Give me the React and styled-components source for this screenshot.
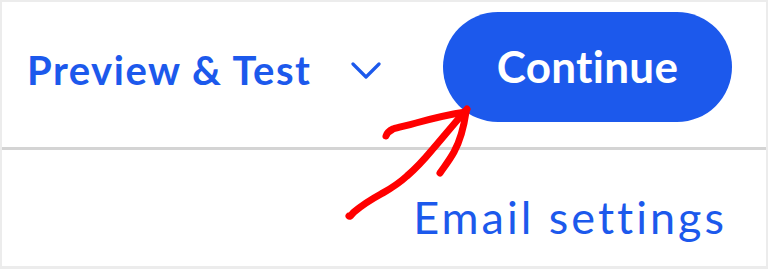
import React from "react";
import styled, { createGlobalStyle } from "styled-components";

const Global = createGlobalStyle`
  html, body { margin: 0; padding: 0; background: #ffffff; }
  body { font-family: "Lato", "Noto Sans", sans-serif; }
`;

const Frame = styled.div`
  position: relative;
  box-sizing: border-box;
  width: 768px;
  height: 269px;
  border: 2px solid #ececec;
  border-bottom-width: 3px;
  background: #ffffff;
  display: flex;
  flex-direction: column;
`;

const TopBar = styled.div`
  display: flex;
  align-items: center;
  justify-content: space-between;
  height: 145px;
  box-sizing: border-box;
  padding: 10px 34px 25px 25px;
`;

const PreviewGroup = styled.button`
  display: flex;
  align-items: center;
  gap: 40px;
  background: none;
  border: none;
  padding: 0;
  margin-top: 6px;
  color: #1c59ec;
  font-family: "Lato", "Noto Sans", sans-serif;
  font-weight: 700;
  font-size: 40px;
  letter-spacing: 1.5px;
  cursor: pointer;
`;

const PrimaryButton = styled.button`
  width: 289px;
  height: 110px;
  border-radius: 55px;
  border: none;
  background: #1c59ec;
  color: #ffffff;
  font-family: "Lato", "Noto Sans", sans-serif;
  font-weight: 700;
  font-size: 44px;
  letter-spacing: 0.3px;
  padding: 0 0 2px;
  cursor: pointer;
`;

const Divider = styled.div`
  height: 3px;
  background: #d4d4d4;
`;

const BottomRow = styled.div`
  flex: 1;
  display: flex;
  justify-content: flex-end;
  align-items: flex-start;
  padding: 40px 42px 0 0;
`;

const LinkText = styled.a`
  color: #1c59ec;
  font-family: "Lato", "Noto Sans", sans-serif;
  font-weight: 400;
  font-size: 45px;
  letter-spacing: 3px;
  margin-right: -3px;
  text-decoration: none;
  line-height: 1.2;
`;

const ArrowOverlay = styled.svg`
  position: absolute;
  left: 0;
  top: 0;
  pointer-events: none;
`;

const Chevron = () => (
  <svg width="30" height="17" viewBox="0 0 30 17" fill="none">
    <path d="M2 2 L15 15 L28 2" stroke="#1c59ec" strokeWidth="3.2" strokeLinecap="round" strokeLinejoin="round" />
  </svg>
);

export default function App() {
  return (
    <>
      <Global />
      <Frame>
        <TopBar>
          <PreviewGroup>
            <span>Preview &amp; Test</span>
            <Chevron />
          </PreviewGroup>
          <PrimaryButton>Continue</PrimaryButton>
        </TopBar>
        <Divider />
        <BottomRow>
          <LinkText href="#">Email settings</LinkText>
        </BottomRow>
        <ArrowOverlay width="764" height="264" viewBox="-2 -2 764 264">
          <g stroke="#ff0000" strokeWidth="7" fill="none" strokeLinecap="round" strokeLinejoin="round">
            <path d="M463 105 C448 122 436 137 428 146 C418 158 410 166 403 172 C392 182 384 186 377 190 C366 196 356 203 350 208 C347 211 346 213 345 212" />
            <path d="M462 108 C448 110 430 114 412 119 C402 122 395 123 389 125 C385 127 383 129 382 132" />
            <path d="M462 108 C460 122 456 137 450 148 C445 157 440 163 436 169" />
          </g>
        </ArrowOverlay>
      </Frame>
    </>
  );
}
